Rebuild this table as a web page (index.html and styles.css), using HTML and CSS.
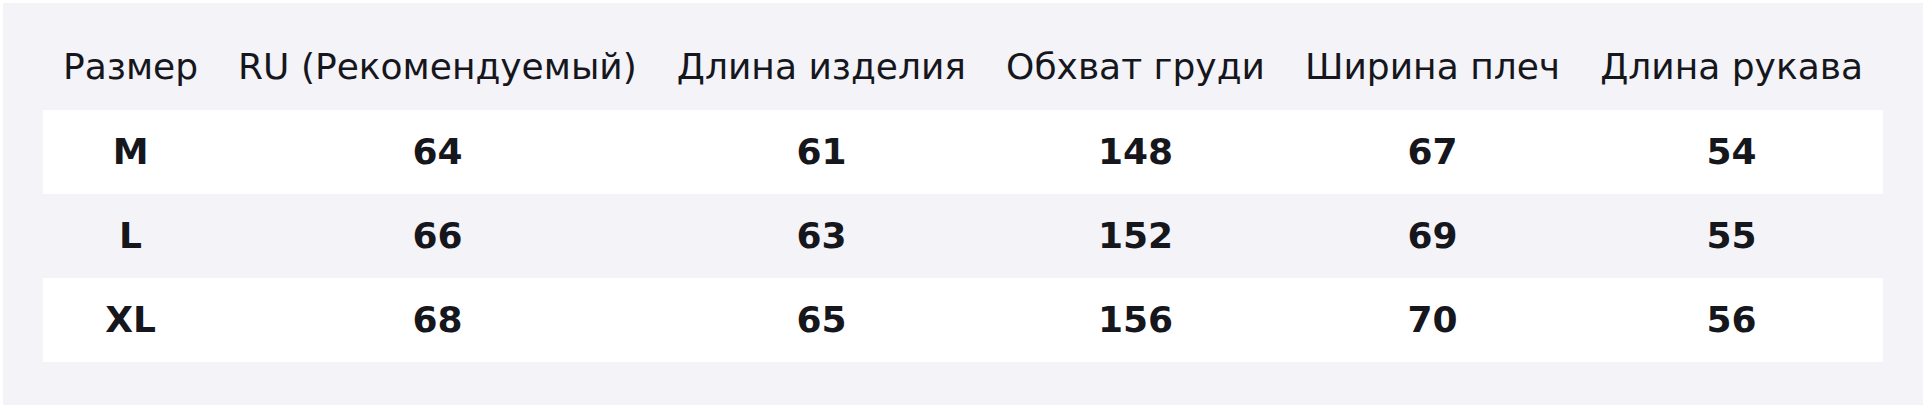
FILE: index.html
```html
<!DOCTYPE html>
<html lang="ru">
<head>
<meta charset="utf-8">
<title>Таблица размеров</title>
<link rel="stylesheet" href="styles.css">
</head>
<body>
<div class="panel">
  <table class="size-table">
    <thead>
      <tr>
        <th>Размер</th>
        <th>RU (Рекомендуемый)</th>
        <th>Длина изделия</th>
        <th>Обхват груди</th>
        <th>Ширина плеч</th>
        <th>Длина рукава</th>
      </tr>
    </thead>
    <tbody>
      <tr><td>M</td><td>64</td><td>61</td><td>148</td><td>67</td><td>54</td></tr>
      <tr><td>L</td><td>66</td><td>63</td><td>152</td><td>69</td><td>55</td></tr>
      <tr><td>XL</td><td>68</td><td>65</td><td>156</td><td>70</td><td>56</td></tr>
    </tbody>
  </table>
</div>
</body>
</html>
```
FILE: styles.css
```css
html, body {
  background: #ffffff;
}
body {
  margin: 3px;
  font-family: "DejaVu Sans", sans-serif;
  color: #16161d;
}
.panel {
  background: #f3f3f8;
  padding: 40px 40px 43px;
}
.size-table {
  width: 100%;
  border-collapse: collapse;
  border-spacing: 0;
  font-size: 36px;
  line-height: 42px;
}
.size-table th {
  font-weight: normal;
  text-align: center;
  white-space: nowrap;
  padding: 3px 20px 22px;
}
.size-table td {
  font-weight: bold;
  text-align: center;
  padding: 21px 20px;
}
.size-table tbody tr:nth-child(odd) {
  background: #ffffff;
}
```
